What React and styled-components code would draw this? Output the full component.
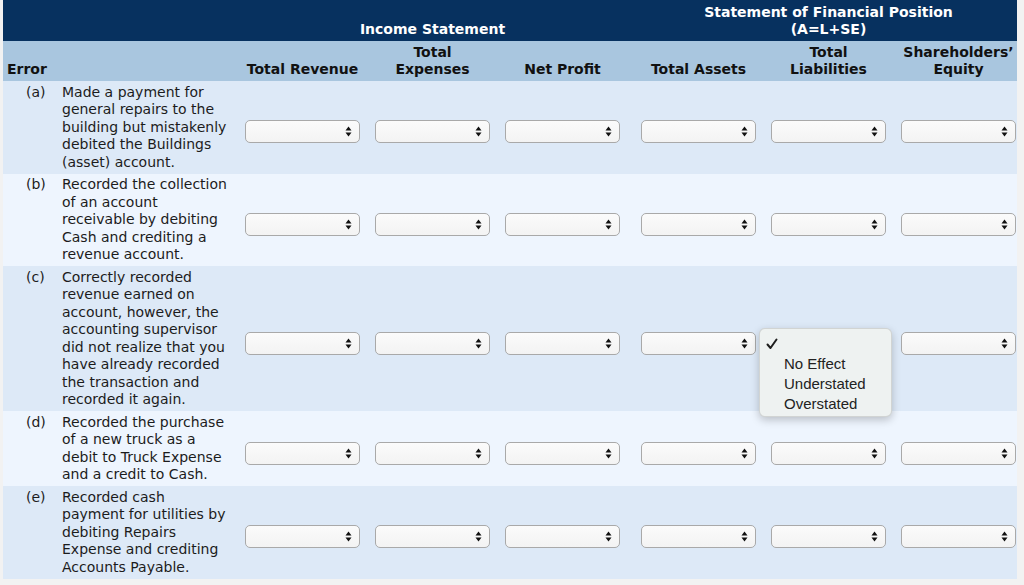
import React from 'react';
import styled, { createGlobalStyle } from 'styled-components';

const GlobalStyle = createGlobalStyle`
  html, body {
    margin: 0;
    padding: 0;
    background: #f2f2f2;
  }
  body {
    font-family: 'DejaVu Sans', Verdana, sans-serif;
    font-size: 14px;
    color: #1c1c1c;
  }
  * {
    box-sizing: border-box;
  }
`

const GRID = '232px 130px 130px 130px 136px 130px 126px'

const Page = styled.div`
  padding-left: 3px;
  width: 1017px;
`

const Row = styled.div`
  display: grid;
  grid-template-columns: ${GRID};
  background: ${p => p.$bg};
`

const TopHead = styled.div`
  grid-column: ${p => p.$span};
  height: 41px;
  padding: 0 ${p => p.$right}px 3px ${p => p.$left}px;
  display: flex;
  align-items: flex-end;
  justify-content: center;
  text-align: center;
  color: #ffffff;
  font-weight: bold;
  line-height: 17px;
`

const SubHead = styled.div`
  height: 40px;
  padding: 0 0 3px ${p => p.$pad}px;
  display: flex;
  align-items: flex-end;
  font-weight: bold;
  line-height: 17px;
  color: #111;
`

const SubLabel = styled.div`
  width: ${p => (p.$left ? 'auto' : '115px')};
  text-align: center;
  white-space: nowrap;
`

const ErrorCell = styled.div`
  display: flex;
  padding: 2.5px 0 2.5px 23px;
  line-height: 17.5px;
`

const Letter = styled.span`
  width: 36px;
  flex-shrink: 0;
`

const Desc = styled.span`
  white-space: nowrap;
`

const Cell = styled.div`
  display: flex;
  align-items: center;
  padding: 9px 0 0 ${p => p.$pad}px;
`

const SelectWrap = styled.div`
  position: relative;
`

const Select = styled.div`
  width: 115px;
  height: 23px;
  border: 1px solid #a9a9a9;
  border-radius: 5px;
  background: linear-gradient(#fbfbfb, #f3f3f3);
  display: flex;
  align-items: center;
  justify-content: flex-end;
  padding-right: 7px;
`

const Menu = styled.div`
  position: absolute;
  top: -4px;
  left: -12px;
  width: 133px;
  height: 89px;
  padding: 5px 0 4px;
  background: #eef2f1;
  border: 1px solid rgba(0, 0, 0, 0.12);
  border-radius: 6px;
  box-shadow: 0 3px 8px rgba(0, 0, 0, 0.22);
  font-family: 'Liberation Sans', Arial, sans-serif;
  font-size: 15px;
  color: #222;
  z-index: 5;
`

const MenuItem = styled.div`
  height: 20px;
  display: flex;
  align-items: center;
  padding-left: ${p => (p.$check ? 6 : 24)}px;
`

const Arrows = () => (
  <svg width="7" height="11" viewBox="0 0 7 11">
    <path d="M3.5 0.5 L6.5 4.5 L0.5 4.5 Z" fill="#111" />
    <path d="M3.5 10.5 L6.5 6.5 L0.5 6.5 Z" fill="#111" />
  </svg>
)

const Check = () => (
  <svg width="12" height="12" viewBox="0 0 12 12">
    <path d="M1.5 6.5 L4.5 10 L10.5 1.5" fill="none" stroke="#1e1e1e" strokeWidth="2" strokeLinecap="round" strokeLinejoin="round" />
  </svg>
)

const pads = [10, 10, 10, 16, 10, 10]

const heads = [
  ['Total Revenue'],
  ['Total', 'Expenses'],
  ['Net Profit'],
  ['Total Assets'],
  ['Total', 'Liabilities'],
  ['Shareholders’', 'Equity'],
]

const errors = [
  {
    id: 'a',
    lines: ['Made a payment for', 'general repairs to the', 'building but mistakenly', 'debited the Buildings', '(asset) account.'],
  },
  {
    id: 'b',
    lines: ['Recorded the collection', 'of an account', 'receivable by debiting', 'Cash and crediting a', 'revenue account.'],
  },
  {
    id: 'c',
    lines: ['Correctly recorded', 'revenue earned on', 'account, however, the', 'accounting supervisor', 'did not realize that you', 'have already recorded', 'the transaction and', 'recorded it again.'],
    open: 4,
  },
  {
    id: 'd',
    lines: ['Recorded the purchase', 'of a new truck as a', 'debit to Truck Expense', 'and a credit to Cash.'],
  },
  {
    id: 'e',
    lines: ['Recorded cash', 'payment for utilities by', 'debiting Repairs', 'Expense and crediting', 'Accounts Payable.'],
  },
]

function Lines({ lines }) {
  return lines.map((l, i) => (
    <React.Fragment key={i}>
      {l}
      {i < lines.length - 1 && <br />}
    </React.Fragment>
  ))
}

export default function App() {
  return (
    <Page>
      <GlobalStyle />
      <Row $bg="#07315f">
        <TopHead $span="1" $left={0} $right={0} />
        <TopHead $span="2 / span 3" $left={10} $right={5}>Income Statement</TopHead>
        <TopHead $span="5 / span 3" $left={16} $right={1}>
          Statement of Financial Position<br />(A=L+SE)
        </TopHead>
      </Row>
      <Row $bg="#a9c6df">
        <SubHead $pad={4}>
          <SubLabel $left>Error</SubLabel>
        </SubHead>
        {heads.map((h, i) => (
          <SubHead key={i} $pad={pads[i]}>
            <SubLabel><Lines lines={h} /></SubLabel>
          </SubHead>
        ))}
      </Row>
      {errors.map((e, r) => (
        <Row key={e.id} $bg={r % 2 === 0 ? '#dde9f7' : '#eef5fe'}>
          <ErrorCell>
            <Letter>({e.id})</Letter>
            <Desc><Lines lines={e.lines} /></Desc>
          </ErrorCell>
          {pads.map((p, c) => (
            <Cell key={c} $pad={p}>
              <SelectWrap>
                <Select><Arrows /></Select>
                {e.open === c && (
                  <Menu>
                    <MenuItem $check><Check /></MenuItem>
                    <MenuItem>No Effect</MenuItem>
                    <MenuItem>Understated</MenuItem>
                    <MenuItem>Overstated</MenuItem>
                  </Menu>
                )}
              </SelectWrap>
            </Cell>
          ))}
        </Row>
      ))}
    </Page>
  )
}
